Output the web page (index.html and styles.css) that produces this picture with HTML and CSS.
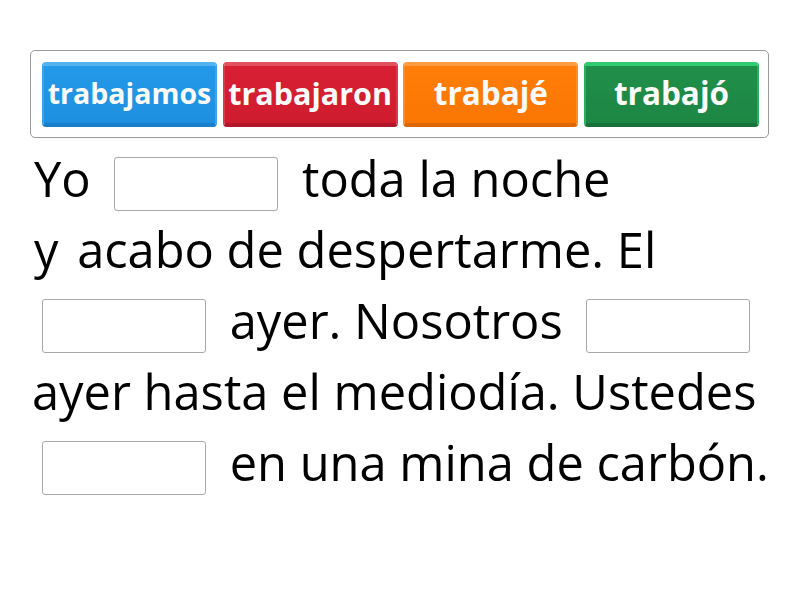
FILE: index.html
```html
<!DOCTYPE html>
<html lang="es">
<head>
<meta charset="utf-8">
<title>Completar</title>
<link rel="stylesheet" href="styles.css">
</head>
<body>
<div class="page">
  <div class="options">
    <div class="tile blue fs-a">trabajamos</div>
    <div class="tile red fs-b">trabajaron</div>
    <div class="tile orange fs-c">trabajé</div>
    <div class="tile green fs-c">trabajó</div>
  </div>
  <div class="text">
    <div class="line indent">Yo <span class="blank"></span> toda la noche</div>
    <div class="line indent"><span class="y">y</span> acabo de despertarme. El</div>
    <div class="line"><span class="blank first"></span> ayer. Nosotros <span class="blank"></span></div>
    <div class="line">ayer hasta el mediodía. Ustedes</div>
    <div class="line"><span class="blank first"></span> en una mina de carbón.</div>
  </div>
</div>
</body>
</html>
```
FILE: styles.css
```css
html, body {
  margin: 0;
  padding: 0;
  background: #ffffff;
}
body {
  font-family: "Open Sans", "Noto Sans", sans-serif;
  color: #000;
}
.page {
  padding: 50px 0 0 30px;
}
.options {
  box-sizing: border-box;
  width: 739px;
  height: 88px;
  border: 1px solid #9a9a9a;
  border-radius: 5px;
  padding: 11px 9px 10px 11px;
  display: flex;
  justify-content: space-between;
}
.tile {
  box-sizing: border-box;
  width: 175px;
  height: 65px;
  border-radius: 4px;
  color: #fbfbfb;
  font-weight: 700;
  display: flex;
  align-items: center;
  justify-content: center;
  padding-bottom: 4px;
  border-top: 4px solid;
  border-left: 2px solid;
  border-right: 2px solid;
  border-bottom: 4px solid;
}
.fs-a { font-size: 28.5px; }
.fs-b { font-size: 30.5px; }
.fs-c { font-size: 31.5px; }
.blue {
  background: linear-gradient(#2399e8, #1f90e0);
  border-color: #55b2f1 #3aa4ec #1a7fcb #3aa4ec;
}
.red {
  background: linear-gradient(#d81f33, #cf1c2e);
  border-color: #e3515f #dc3a4b #b3172a #dc3a4b;
}
.orange {
  background: linear-gradient(#ff7d08, #fb7602);
  border-color: #ff9c42 #ff8c26 #dd6700 #ff8c26;
}
.green {
  background: linear-gradient(#208f4a, #1d8644);
  border-color: #30cc70 #28b05e #18733b #28b05e;
}
.text {
  margin-top: 5px;
  padding-left: 2px;
  font-size: 48.8px;
  line-height: 71px;
}
.line {
  white-space: nowrap;
}
.indent {
  padding-left: 2px;
}
.blank {
  display: inline-block;
  box-sizing: border-box;
  width: 164px;
  height: 54px;
  border: 1px solid #a8a8a8;
  border-radius: 3px;
  vertical-align: middle;
  margin: 0 11px;
  background: #fff;
}
.blank.first {
  margin-left: 10px;
}
.y {
  margin-right: 6px;
}
```
